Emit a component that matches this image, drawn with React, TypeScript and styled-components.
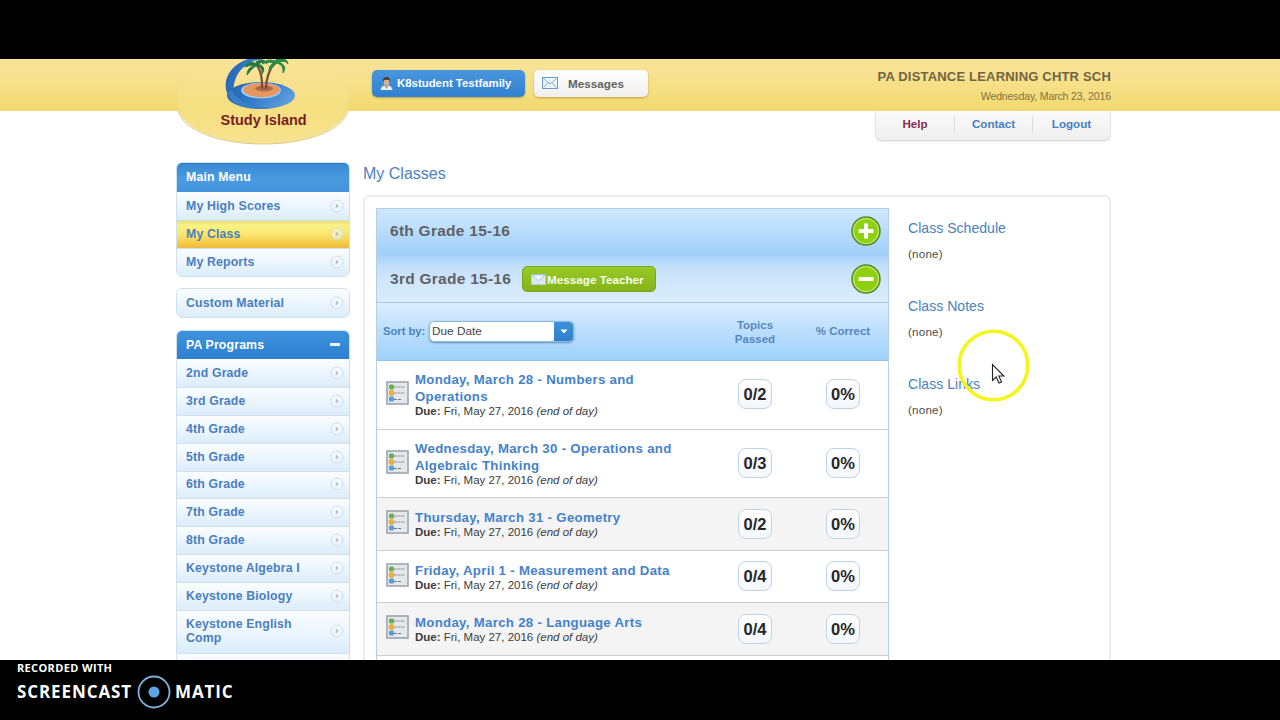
import React from "react";
import styled, { createGlobalStyle } from "styled-components";

const Global = createGlobalStyle`
  * { box-sizing: border-box; }
  html, body { margin: 0; padding: 0; background: #000; }
  body { font-family: "Liberation Sans", Arial, sans-serif; overflow: hidden; }
`;

const Screen = styled.div`
  width: 1280px;
  height: 720px;
  padding-top: 59px;
  background: #000;
  display: flex;
  flex-direction: column;
  overflow: hidden;
`;

const Page = styled.div`
  position: relative;
  height: 601px;
  flex: none;
  background: #fff;
  overflow: hidden;
`;

const Header = styled.header`
  height: 52px;
  padding-left: 176px;
  background: linear-gradient(#f8e496 0%, #f8e294 25%, #f3db70 92%, #efd77c 100%);
`;

const HeaderInner = styled.div`
  width: 935px;
  display: flex;
  align-items: flex-start;
`;

const Logo = styled.div`
  width: 174px;
  height: 86px;
  flex: none;
`;

const LogoText = styled.text`
  font: bold 14.5px "Liberation Sans", Arial, sans-serif;
  fill: #7b1c22;
`;

const HeaderButtons = styled.div`
  display: flex;
  gap: 9px;
  padding: 11px 0 0 22px;
`;

const HeaderButton = styled.button<{ $primary?: boolean }>`
  height: 27px;
  width: ${(p) => (p.$primary ? 153 : 114)}px;
  padding: 0 0 1px 8px;
  display: flex;
  align-items: center;
  gap: ${(p) => (p.$primary ? 4 : 10)}px;
  border: 0;
  border-radius: 5px;
  font: bold ${(p) => (p.$primary ? 11.4 : 11.7)}px "Liberation Sans", Arial, sans-serif;
  white-space: nowrap;
  color: ${(p) => (p.$primary ? "#fff" : "#626262")};
  background: ${(p) =>
    p.$primary ? "linear-gradient(#4796dc, #3180d1)" : "linear-gradient(#ffffff, #f0efee)"};
  box-shadow: 0 1px 2px rgba(130, 105, 30, 0.5);
`;

const Account = styled.div`
  width: 236px;
  margin-left: auto;
  display: flex;
  flex-direction: column;
  align-items: flex-end;
`;

const School = styled.div`
  height: 30px;
  padding-top: 10px;
  font-size: 13px;
  font-weight: bold;
  line-height: 15px;
  letter-spacing: 0.19px;
  color: #6f6543;
  white-space: nowrap;
`;

const Today = styled.div`
  height: 22px;
  line-height: 15px;
  font-size: 10.6px;
  letter-spacing: -0.17px;
  color: #7d7248;
`;

const AccountLinks = styled.nav`
  width: 236px;
  height: 30px;
  display: grid;
  grid-template-columns: 1fr 1fr 1fr;
  align-items: start;
  padding-top: 5px;
  border: 1px solid #e3e3e3;
  border-top: 0;
  border-bottom-color: #d9d9d9;
  border-radius: 0 0 6px 6px;
  background: linear-gradient(#fbfbfb, #efefef);
  box-shadow: 0 1px 1px rgba(0, 0, 0, 0.06);
`;

const AccountLink = styled.a<{ $active?: boolean }>`
  height: 16px;
  line-height: 16px;
  text-align: center;
  font-size: 11.6px;
  font-weight: bold;
  color: ${(p) => (p.$active ? "#862a48" : "#4580c2")};
  & + & {
    border-left: 1px solid #dcdcdc;
  }
`;

const Content = styled.div`
  width: 935px;
  margin-left: 176px;
  display: flex;
  gap: 13px;
`;

const Sidebar = styled.aside`
  width: 174px;
  flex: none;
  padding-top: 51px;
`;

const Menu = styled.div<{ $gap: number }>`
  margin-bottom: ${(p) => p.$gap}px;
  border-radius: 6px;
  border: 1px solid #cfe0ef;
  overflow: hidden;
`;

const MenuTitle = styled.div<{ $dark?: boolean }>`
  margin: -1px -1px 0;
  height: ${(p) => (p.$dark ? 29 : 30.3)}px;
  display: flex;
  align-items: center;
  justify-content: space-between;
  padding: 0 10px;
  font-size: 12.3px;
  font-weight: bold;
  letter-spacing: 0.15px;
  color: #fff;
  background: ${(p) =>
    p.$dark
      ? "linear-gradient(#3f93de, #2c80cf)"
      : "linear-gradient(#2e78bd 0, #3d8dd6 4px, #4b9be1 60%, #4492d9 100%)"};
`;

const Dash = styled.span`
  width: 10px;
  height: 3px;
  background: #e9f5ff;
`;

const MenuItem = styled.a<{ $active?: boolean; $tall?: boolean }>`
  height: ${(p) => (p.$tall ? 43 : 27.85)}px;
  display: flex;
  align-items: center;
  justify-content: space-between;
  padding: 0 5px 1px 9px;
  font-size: 12.3px;
  line-height: 14px;
  font-weight: bold;
  letter-spacing: 0.16px;
  color: #4a7fbe;
  background: ${(p) =>
    p.$active
      ? "linear-gradient(#e9de68 0, #f9f287 15%, #fae873 45%, #f5c945 85%, #edb942 100%)"
      : "linear-gradient(#fbfdff, #e9f4fe 60%, #dbecfb)"};
  & + & {
    border-top: 1px solid #d2e0ec;
  }
`;

const Main = styled.main`
  width: 748px;
  flex: none;
  padding-top: 53px;
`;

const Title = styled.h1`
  margin: 0;
  height: 31px;
  font-size: 16px;
  font-weight: normal;
  line-height: 20px;
  color: #4b82bd;
`;

const Panel = styled.section`
  height: 520px;
  border: 2px solid #ececec;
  border-radius: 6px;
  display: flex;
  padding: 11px 0 0 11px;
`;

const Classes = styled.div`
  width: 513px;
  flex: none;
  border: 1px solid #b4cfe2;
  border-bottom: 0;
`;

const ClassBar = styled.div<{ $open?: boolean }>`
  height: ${(p) => (p.$open ? 46 : 47)}px;
  display: flex;
  align-items: center;
  padding: 0 7px ${(p) => (p.$open ? 0 : 3)}px 13px;
  background: ${(p) =>
    p.$open
      ? "linear-gradient(#a9d4fa 0, #c4e0fb 25%, #d2e7fc 60%, #dbecfc 100%)"
      : "linear-gradient(#cfe7fd 0, #c0e0fd 35%, #a4d2fb 85%, #a2d0f9 100%)"};
`;

const ClassName = styled.span`
  font-size: 15.5px;
  font-weight: bold;
  letter-spacing: 0.26px;
  color: #5f6265;
`;

const TeacherButton = styled.button`
  width: 134px;
  height: 26px;
  margin-left: 11px;
  padding: 0 0 0 8px;
  display: flex;
  align-items: center;
  gap: 1px;
  border: 1px solid #79a61f;
  border-radius: 5px;
  background: linear-gradient(#9aca27, #83b318);
  font: bold 11.7px "Liberation Sans", Arial, sans-serif;
  white-space: nowrap;
  color: #f9ffe9;
`;

const Toggle = styled.span`
  margin-left: auto;
  height: 30px;
`;

const SortBar = styled.div`
  height: 59px;
  display: flex;
  align-items: center;
  padding: 0 0 1px 6px;
  border-top: 1px solid #a9c9e2;
  border-bottom: 1px solid #92c4ec;
  background: linear-gradient(#dbeefe 0, #c4e2fd 35%, #a3d4fc 90%, #9ed0f8 100%);
  color: #4a83c0;
  font-size: 11.5px;
  line-height: 14px;
  font-weight: bold;
`;

const SortLabel = styled.span`
  width: 46px;
  font-size: 11.2px;
`;

const Select = styled.div`
  width: 145px;
  height: 21px;
  display: flex;
  border-radius: 5px;
  overflow: hidden;
  background: #fff;
  border: 1px solid #8fb9dc;
  box-shadow: 0 1px 2px rgba(40, 90, 140, 0.6);
  color: #444;
  font-weight: normal;
  font-size: 11.8px;
  line-height: 18px;
`;

const SelectValue = styled.span`
  flex: 1;
  padding-left: 2px;
`;

const SelectArrow = styled.span`
  width: 19px;
  display: flex;
  align-items: center;
  justify-content: center;
  background: linear-gradient(#3f92dc, #2f7ecb);
`;

const ColumnLabel = styled.span<{ $first?: boolean }>`
  width: 88px;
  margin-left: ${(p) => (p.$first ? "auto" : "0")};
  margin-right: ${(p) => (p.$first ? "0" : "1px")};
  padding-top: ${(p) => (p.$first ? "1px" : "0")};
  text-align: center;
  color: #5686c0;
`;

const Row = styled.div<{ $shaded?: boolean; $tall?: boolean }>`
  height: ${(p) => (p.$tall ? 68.7 : 52.5)}px;
  display: flex;
  align-items: center;
  padding-left: 9px;
  border-bottom: 1px solid #cfcfcf;
  background: ${(p) => (p.$shaded ? "#f4f4f5" : "#fff")};
`;

const TopicPicture = styled.svg`
  flex: none;
  width: 23px;
  height: 24px;
  margin-bottom: 4px;
`;

const RowText = styled.div`
  width: 302px;
  padding-left: 6px;
  white-space: nowrap;
`;

const RowTitle = styled.div`
  font-size: 13.2px;
  font-weight: bold;
  line-height: 17px;
  letter-spacing: 0.32px;
  color: #4482ca;
`;

const Due = styled.div`
  font-size: 11.5px;
  line-height: 13px;
  color: #3c3c3c;
`;

const ScoreCell = styled.div`
  width: 88px;
  margin-bottom: 1px;
  display: flex;
  justify-content: center;
`;

const Score = styled.span`
  width: 34px;
  height: 30px;
  border: 1px solid #bfd3e6;
  border-radius: 8px;
  background: linear-gradient(#fff, #f3f7fb);
  text-align: center;
  font-size: 16.5px;
  font-weight: bold;
  line-height: 29px;
  color: #272727;
`;

const Details = styled.div`
  padding: 11px 0 0 19px;
`;

const Detail = styled.div`
  height: 78px;
`;

const DetailTitle = styled.h2`
  margin: 0;
  height: 27px;
  font-size: 14.1px;
  font-weight: normal;
  line-height: 18px;
  color: #4b82b9;
`;

const DetailValue = styled.div`
  font-size: 11.6px;
  letter-spacing: 0.22px;
  line-height: 16px;
  color: #4c4c4c;
`;

const Pointer = styled.svg`
  position: absolute;
  left: 955px;
  top: 268px;
`;

const Recorder = styled.footer`
  height: 60px;
  padding: 0 0 0 17px;
  color: #fff;
  font-family: "Open Sans", "Noto Sans", sans-serif;
  font-weight: bold;
`;

const RecordedWith = styled.div`
  font-size: 11px;
  line-height: 15px;
  letter-spacing: 0.35px;
`;

const Brand = styled.div`
  height: 33px;
  display: flex;
  align-items: center;
  font-size: 17px;
  letter-spacing: 0.9px;
`;

const BrandWord = styled.span<{ $width: number }>`
  width: ${(p) => p.$width}px;
`;

const BrandRing = styled.svg`
  flex: none;
  margin: 0 4px 0 3px;
`;

const Island = () => (
  <svg width="174" height="86" viewBox="0 0 174 86">
    <defs>
      <linearGradient id="plate" x1="0" y1="0" x2="0" y2="1">
        <stop offset="0" stopColor="#f8e496" />
        <stop offset="0.15" stopColor="#f8e294" />
        <stop offset="0.6" stopColor="#f5df80" />
        <stop offset="1" stopColor="#f7e391" />
      </linearGradient>
      <linearGradient id="sea" x1="0" y1="0" x2="1" y2="0.4">
        <stop offset="0" stopColor="#2560ad" />
        <stop offset="0.5" stopColor="#2f77c4" />
        <stop offset="1" stopColor="#5a9bdb" />
      </linearGradient>
    </defs>
    <path d="M1 44 C1 68 40 85 87 85 C134 85 173 68 173 44 C173 30 160 12 150 0 H24 C14 12 1 30 1 44Z" fill="url(#plate)" />
    <path d="M2 52 C8 72 44 85 87 85 C130 85 166 72 172 52" fill="none" stroke="#dccb86" strokeWidth="1" />
    <path d="M72 0 C50 7 42 30 58 43 C56 27 58 10 78 2 L88 0Z" fill="url(#sea)" />
    <ellipse cx="85" cy="36.500" rx="34" ry="13.500" fill="url(#sea)" />
    <path d="M52 33 C54 47 74 52 96 49 C80 48 60 44 56 31Z" fill="#3a7dc8" />
    <ellipse cx="85" cy="31.500" rx="20" ry="8" fill="#9fc9ec" />
    <ellipse cx="85.500" cy="31" rx="18" ry="7" fill="#e7965f" />
    <ellipse cx="88" cy="29.500" rx="9" ry="3" fill="#b06b4c" />
    <path d="M86 30 Q87 16 81 6 M90 30 Q90 15 99 3" fill="none" stroke="#7d4a35" strokeWidth="2.200" />
    <path d="M80 5 Q73 0 69 8 Q75 5 79 7 Q71 8 71 16 Q77 8 80 7 Q87 7 86 15 Q91 8 82 5 Q89 1 91 5 Q88 -2 80 3Z" fill="#237b43" stroke="#237b43" />
    <path d="M99 2 Q91 -1 86 5 Q93 2 97 4 Q92 8 93 12 Q98 6 101 4 Q108 6 107 14 Q112 7 103 3 Q110 1 112 5 Q111 -2 101 0Z" fill="#2d8a49" stroke="#2d8a49" />
    <LogoText x="44.500" y="65.500">Study Island</LogoText>
  </svg>
);

const UserIcon = () => (
  <svg width="13" height="15" viewBox="0 0 13 15">
    <path d="M0.500 14 Q1 10 4.500 9.500 L8.500 9.500 Q12 10 12.500 14Z" fill="#e8eef4" />
    <path d="M5 8h3v3l-1.500 2L5 11Z" fill="#c99a76" />
    <ellipse cx="6.500" cy="5.800" rx="2.900" ry="3.800" fill="#dcb08c" />
    <path d="M3 6 Q2.500 1 6.500 1 Q10.500 1 10 6 L9 4 Q6.500 3.500 4.500 4Z" fill="#4a3a32" />
  </svg>
);

const Envelope = () => (
  <svg width="16" height="12" viewBox="0 0 16 12">
    <rect x="0.500" y="0.500" width="15" height="11" fill="#edf5fc" stroke="#6e9cc9" />
    <path d="M1.500 1.500 L8 7 L14.500 1.500 M1.500 10.500 L6 6 M14.500 10.500 L10 6" fill="none" stroke="#83abd2" />
  </svg>
);

const SealedEnvelope = () => (
  <svg width="15" height="11" viewBox="0 0 15 11">
    <rect x="0.500" y="0.500" width="14" height="10" rx="0.500" fill="#d8e9f7" stroke="#b3d2ea" />
    <path d="M1 1H14L7.500 6.500Z" fill="#fff" stroke="#8db6dc" strokeWidth="0.800" />
  </svg>
);

const Chevron = () => (
  <svg width="14" height="14" viewBox="0 0 14 14">
    <circle cx="7" cy="7" r="6" fill="#f5f9fc" fillOpacity="0.45" stroke="#c5d1dc" strokeOpacity="0.75" />
    <path d="M5.800 4.500 L8.800 7 L5.800 9.500Z" fill="#b3bfcb" />
  </svg>
);

const RoundSign = ({ plus }: { plus?: boolean }) => (
  <svg width="30" height="30" viewBox="0 0 30 30">
    <circle cx="15" cy="15" r="14" fill="#8fd013" stroke="#548c2d" strokeWidth="1.500" />
    <circle cx="15" cy="15" r="12.500" fill="none" stroke="#c5ea7c" strokeWidth="1.100" />
    <path d={plus ? "M7.500 15H22.500M15 7.500V22.500" : "M7.500 15H22.500"} stroke="#fff" strokeWidth="4" />
  </svg>
);

const TopicIcon = () => (
  <TopicPicture viewBox="0 0 23 24">
    <rect x="1" y="1" width="21" height="22" fill="#e3e8ed" stroke="#9ba4ae" strokeWidth="1.600" />
    <rect x="3" y="3.500" width="5" height="5" rx="1.500" fill="#6bb04f" />
    <circle cx="5.500" cy="12" r="2.900" fill="#efae39" />
    <rect x="3" y="15.500" width="5" height="5" rx="1.500" fill="#549fd8" />
    <path d="M8 6H19M8 12H19" stroke="#9298a0" strokeWidth="1.200" strokeDasharray="3 0.500" />
    <path d="M8 18.500H16" stroke="#6c7985" strokeWidth="1.200" strokeDasharray="3 1" />
  </TopicPicture>
);

const grades = [
  "2nd Grade",
  "3rd Grade",
  "4th Grade",
  "5th Grade",
  "6th Grade",
  "7th Grade",
  "8th Grade",
  "Keystone Algebra I",
  "Keystone Biology",
];

const topics = [
  { title: ["Monday, March 28 - Numbers and", "Operations"], passed: "0/2" },
  { title: ["Wednesday, March 30 - Operations and", "Algebraic Thinking"], passed: "0/3" },
  { title: ["Thursday, March 31 - Geometry"], passed: "0/2", shaded: true },
  { title: ["Friday, April 1 - Measurement and Data"], passed: "0/4" },
  { title: ["Monday, March 28 - Language Arts"], passed: "0/4", shaded: true },
];

export default function App() {
  return (
    <>
      <Global />
      <Screen>
        <Page>
          <Header>
            <HeaderInner>
              <Logo>
                <Island />
              </Logo>
              <HeaderButtons>
                <HeaderButton $primary>
                  <UserIcon />
                  K8student Testfamily
                </HeaderButton>
                <HeaderButton>
                  <Envelope />
                  Messages
                </HeaderButton>
              </HeaderButtons>
              <Account>
                <School>PA DISTANCE LEARNING CHTR SCH</School>
                <Today>Wednesday, March 23, 2016</Today>
                <AccountLinks>
                  <AccountLink $active>Help</AccountLink>
                  <AccountLink>Contact</AccountLink>
                  <AccountLink>Logout</AccountLink>
                </AccountLinks>
              </Account>
            </HeaderInner>
          </Header>
          <Content>
            <Sidebar>
              <Menu $gap={11.5}>
                <MenuTitle>Main Menu</MenuTitle>
                <MenuItem>My High Scores<Chevron /></MenuItem>
                <MenuItem $active>My Class<Chevron /></MenuItem>
                <MenuItem>My Reports<Chevron /></MenuItem>
              </Menu>
              <Menu $gap={12}>
                <MenuItem>Custom Material<Chevron /></MenuItem>
              </Menu>
              <Menu $gap={0}>
                <MenuTitle $dark>PA Programs<Dash /></MenuTitle>
                {grades.map((g) => (
                  <MenuItem key={g}>{g}<Chevron /></MenuItem>
                ))}
                <MenuItem $tall>
                  <span>Keystone English<br />Comp</span>
                  <Chevron />
                </MenuItem>
                <MenuItem />
              </Menu>
            </Sidebar>
            <Main>
              <Title>My Classes</Title>
              <Panel>
                <Classes>
                  <ClassBar>
                    <ClassName>6th Grade 15-16</ClassName>
                    <Toggle><RoundSign plus /></Toggle>
                  </ClassBar>
                  <ClassBar $open>
                    <ClassName>3rd Grade 15-16</ClassName>
                    <TeacherButton>
                      <SealedEnvelope />
                      Message Teacher
                    </TeacherButton>
                    <Toggle><RoundSign /></Toggle>
                  </ClassBar>
                  <SortBar>
                    <SortLabel>Sort by:</SortLabel>
                    <Select>
                      <SelectValue>Due Date</SelectValue>
                      <SelectArrow>
                        <svg width="8" height="5" viewBox="0 0 8 5">
                          <path d="M0.500 0.500H7.500L4 4.500Z" fill="#fff" />
                        </svg>
                      </SelectArrow>
                    </Select>
                    <ColumnLabel $first>Topics<br />Passed</ColumnLabel>
                    <ColumnLabel>% Correct</ColumnLabel>
                  </SortBar>
                  {topics.map((t) => (
                    <Row key={t.title[0]} $shaded={t.shaded} $tall={t.title.length > 1}>
                      <TopicIcon />
                      <RowText>
                        {t.title.map((line) => (
                          <RowTitle key={line}>{line}</RowTitle>
                        ))}
                        <Due>
                          <b>Due:</b> Fri, May 27, 2016 <i>(end of day)</i>
                        </Due>
                      </RowText>
                      <ScoreCell><Score>{t.passed}</Score></ScoreCell>
                      <ScoreCell><Score>0%</Score></ScoreCell>
                    </Row>
                  ))}
                </Classes>
                <Details>
                  {["Class Schedule", "Class Notes", "Class Links"].map((d) => (
                    <Detail key={d}>
                      <DetailTitle>{d}</DetailTitle>
                      <DetailValue>(none)</DetailValue>
                    </Detail>
                  ))}
                </Details>
              </Panel>
            </Main>
          </Content>
          <Pointer width="78" height="78" viewBox="0 0 78 78">
            <circle cx="38.500" cy="38.500" r="34.300" fill="none" stroke="#f3f51c" strokeWidth="3.600" />
            <path d="M37.500 37.500V53.500L41.200 50L44 56L46.500 55L43.800 49H48.800Z" fill="#fff" stroke="#222" strokeWidth="1.100" />
          </Pointer>
        </Page>
        <Recorder>
          <RecordedWith>RECORDED WITH</RecordedWith>
          <Brand>
            <BrandWord $width={117}>SCREENCAST</BrandWord>
            <BrandRing width="34" height="34" viewBox="0 0 34 34">
              <circle cx="17" cy="17" r="15.500" fill="none" stroke="#7fb0dc" strokeWidth="1.800" />
              <circle cx="17" cy="17" r="5.500" fill="#5ba3e2" />
            </BrandRing>
            <BrandWord $width={60}>MATIC</BrandWord>
          </Brand>
        </Recorder>
      </Screen>
    </>
  );
}
